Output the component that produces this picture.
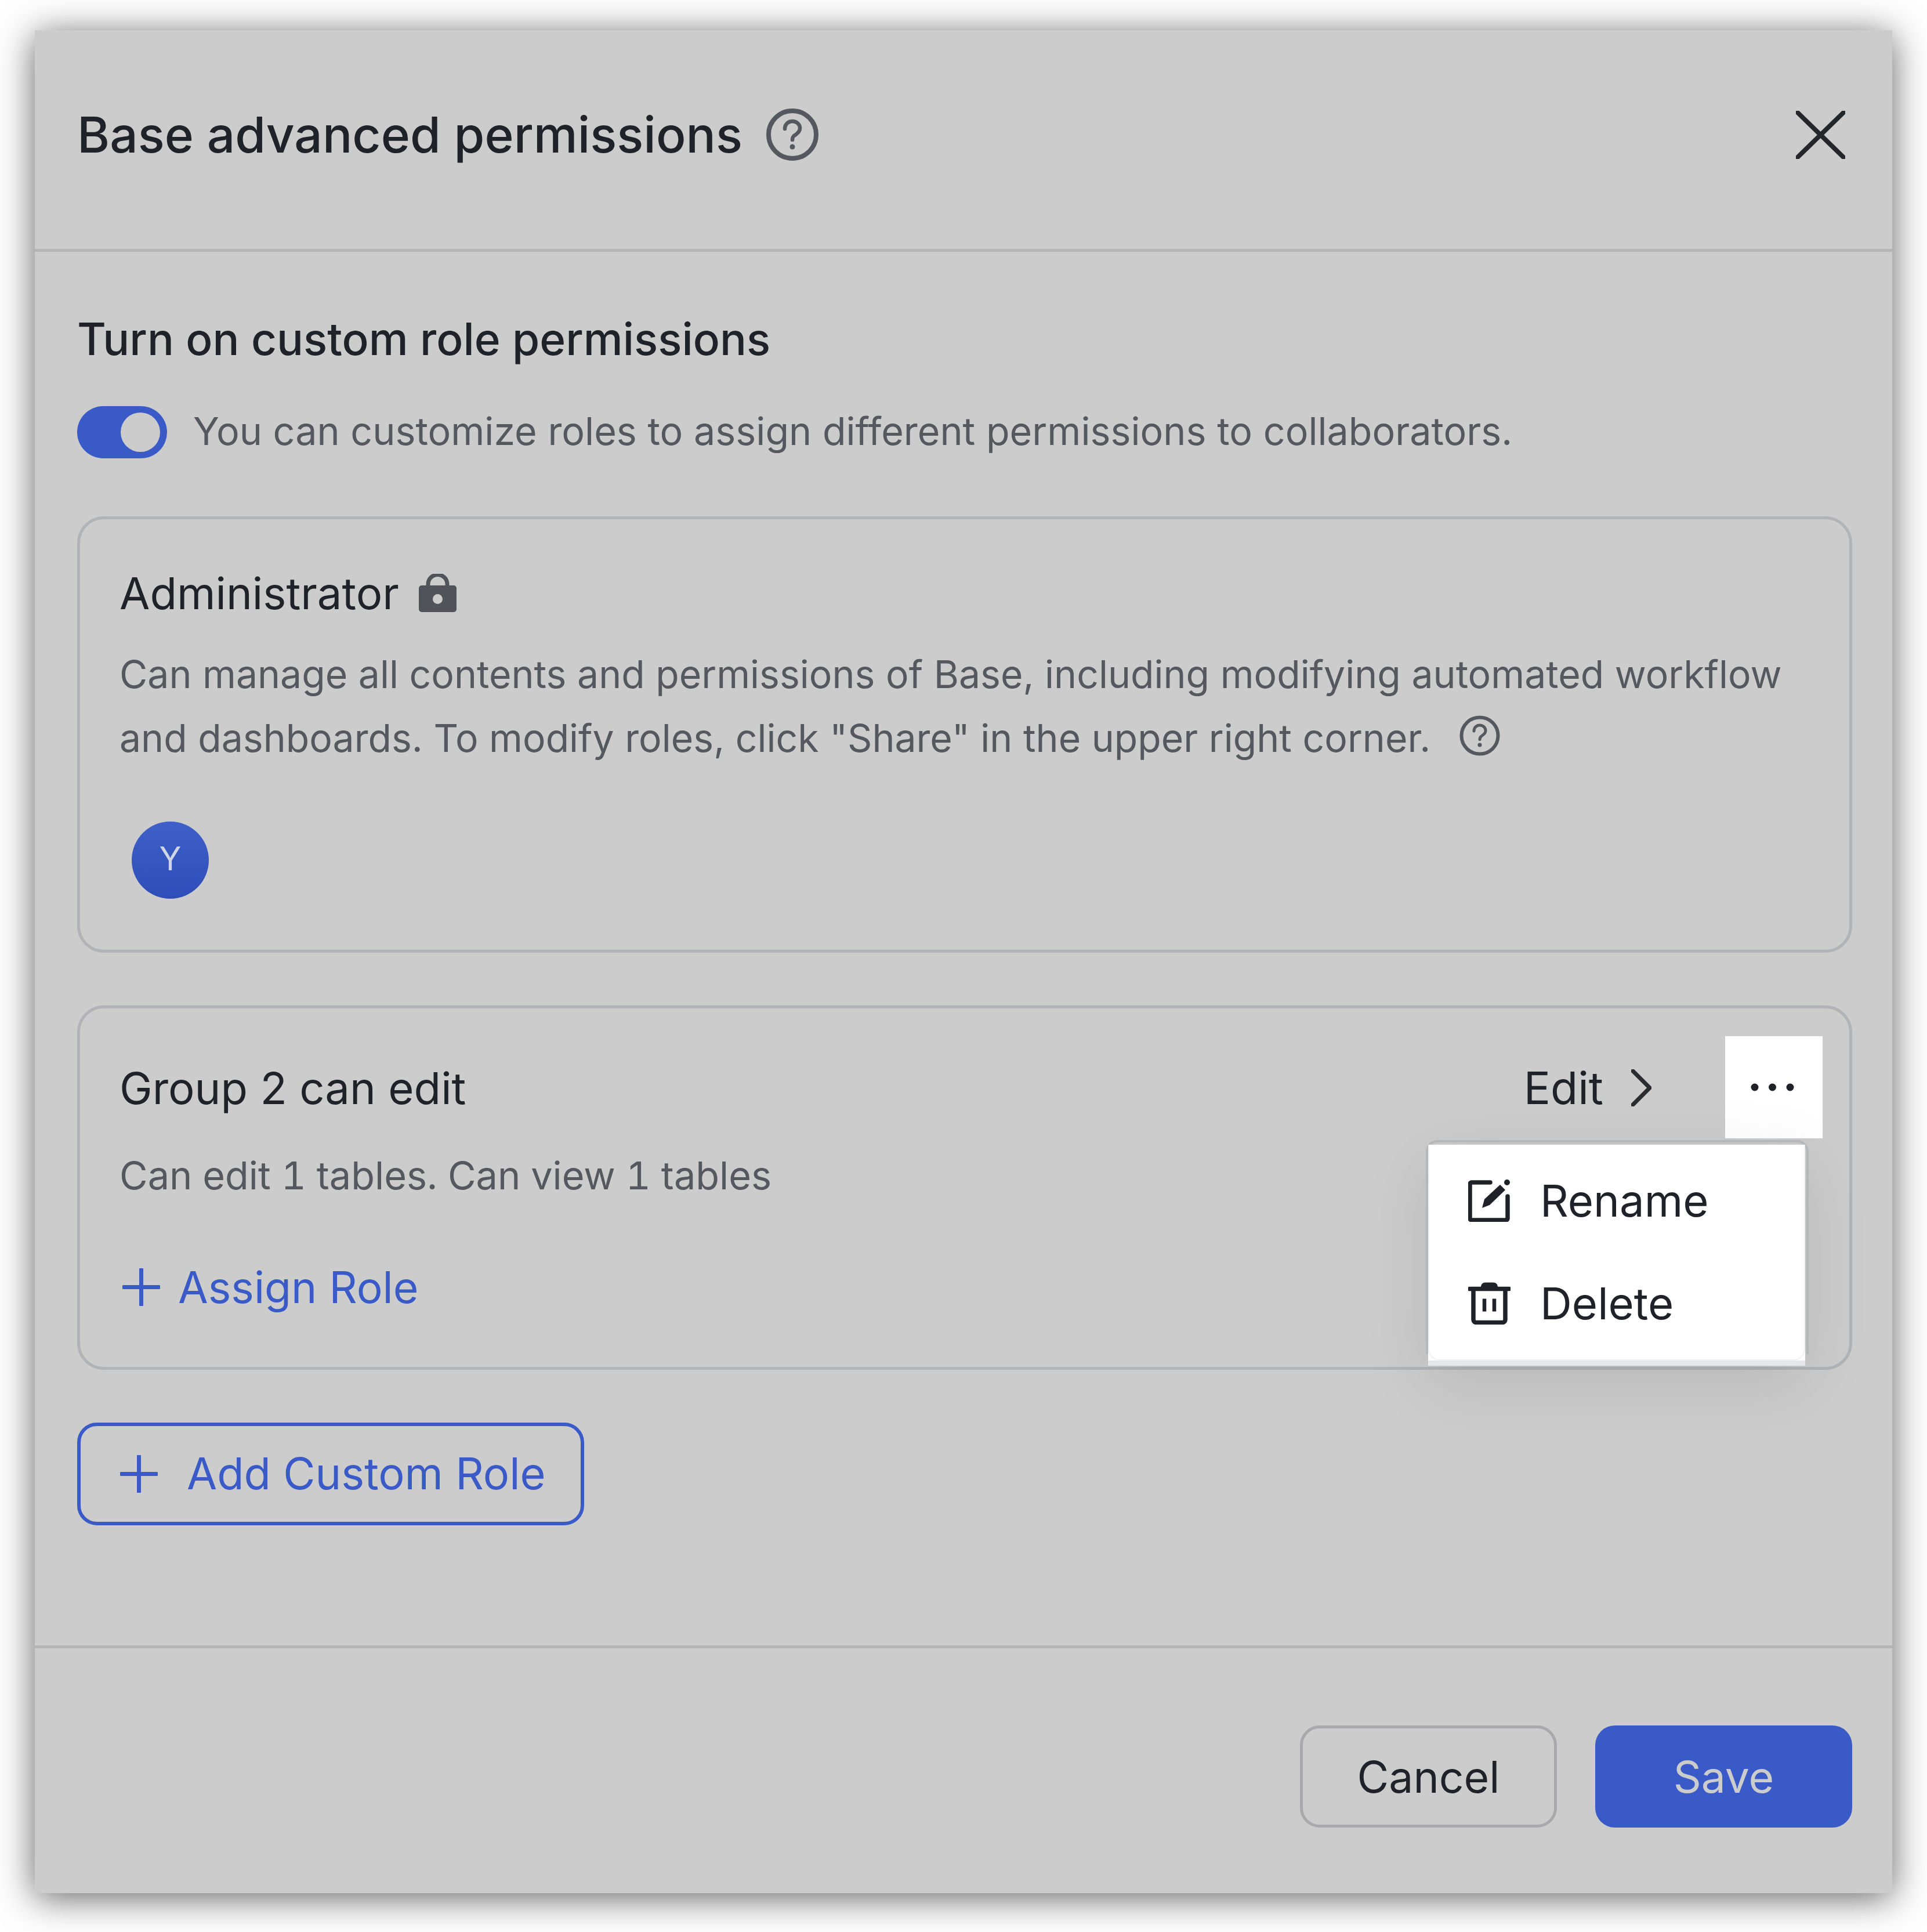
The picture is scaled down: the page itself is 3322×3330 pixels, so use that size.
<div class="page">
  <div class="dialog">
    <header class="head">
      <h1>Base advanced permissions</h1>
      <svg class="q-big" viewBox="0 0 90 90"><circle cx="45" cy="45" r="41" fill="none" stroke="#55585e" stroke-width="8"/><path d="M32 35c0-8 6-13 13-13s13 5 13 12c0 5-3 8-7 11-4 2-6 4-6 9" fill="none" stroke="#55585e" stroke-width="6.500" stroke-linecap="round"/><circle cx="45" cy="66" r="4.500" fill="#55585e"/></svg>
      <svg class="close" viewBox="0 0 85 83"><path d="M3 3l79 77M82 3L3 80" fill="none" stroke="#23262b" stroke-width="8" stroke-linecap="round"/></svg>
    </header>

    <main class="body">
      <h2>Turn on custom role permissions</h2>
      <div class="toggle-row">
        <span class="toggle"><span class="knob"></span></span>
        <span class="muted lead">You can customize roles to assign different permissions to collaborators.</span>
      </div>

      <section class="card admin">
        <div class="name-row">
          <span class="name">Administrator</span>
          <svg class="lock" viewBox="0 0 65 66"><path d="M16 22v-4a16.500 16.500 0 0 1 33 0v4" fill="none" stroke="#50535a" stroke-width="7"/><path fill-rule="evenodd" fill="#50535a" d="M5 20h55a5 5 0 0 1 5 5v36a5 5 0 0 1-5 5H5a5 5 0 0 1-5-5V25a5 5 0 0 1 5-5zm27.500 15a8.500 8.500 0 1 0 0 17 8.500 8.500 0 0 0 0-17z"/></svg>
        </div>
        <p class="muted desc">Can manage all contents and permissions of Base, including modifying automated workflow and dashboards. To modify roles, click "Share" in the upper right corner.<svg class="q-small" viewBox="0 0 70 70"><circle cx="35" cy="35" r="31.500" fill="none" stroke="#55585e" stroke-width="6"/><path d="M25 27c0-6 4.500-10 10-10s10 4 10 9.500c0 4-2.500 6-5.500 8-3 2-4.500 3.500-4.500 7" fill="none" stroke="#55585e" stroke-width="5" stroke-linecap="round"/><circle cx="35" cy="51" r="3.600" fill="#55585e"/></svg></p>
        <div class="avatar">Y</div>
      </section>

      <section class="card group">
        <div class="name-row">
          <span class="name grow">Group 2 can edit</span>
          <span class="edit">Edit</span>
          <svg class="chev" viewBox="0 0 35 64"><path d="M3 3l29 29L3 61" fill="none" stroke="#2a2d32" stroke-width="7" stroke-linecap="round" stroke-linejoin="round"/></svg>
        </div>
        <p class="muted sub">Can edit 1 tables. Can view 1 tables</p>
        <div class="assign">
          <svg class="plus" viewBox="0 0 65 65"><path d="M32.500 2v61M2 32.500h61" fill="none" stroke="#3a5bc7" stroke-width="7" stroke-linecap="round"/></svg>
          <span>Assign Role</span>
        </div>

        <div class="more">
          <svg class="dots" viewBox="0 0 75 14"><circle cx="7" cy="7" r="6.500" fill="#1f2329"/><circle cx="37.500" cy="7" r="6.500" fill="#1f2329"/><circle cx="68" cy="7" r="6.500" fill="#1f2329"/></svg>
        </div>
        <div class="menu">
          <div class="item">
            <svg class="mi" viewBox="0 0 73 74"><path d="M38 6H6a3 3 0 0 0-3 3v59a3 3 0 0 0 3 3h59a3 3 0 0 0 3-3V30" fill="none" stroke="#1f2329" stroke-width="7.500" stroke-linecap="round"/><path d="M24 50l4-15 27-25 9 9-27 26z" fill="#1f2329"/><circle cx="67" cy="6" r="5" fill="#1f2329"/></svg>
            <span>Rename</span>
          </div>
          <div class="item">
            <svg class="mi" viewBox="0 0 73 73"><path d="M2 12h69" stroke="#1f2329" stroke-width="7.500" stroke-linecap="round"/><path d="M22 9c0-5 3-8 8-8h13c5 0 8 3 8 8z" fill="#1f2329"/><path d="M9 13v52a5 5 0 0 0 5 5h45a5 5 0 0 0 5-5V13" fill="none" stroke="#1f2329" stroke-width="7.500"/><path d="M28 29v22M45 29v22" stroke="#1f2329" stroke-width="6.500"/></svg>
            <span>Delete</span>
          </div>
        </div>
      </section>

      <button class="add">
        <svg class="plus" viewBox="0 0 65 65"><path d="M32.500 2v61M2 32.500h61" fill="none" stroke="#3a5bc7" stroke-width="7" stroke-linecap="round"/></svg>
        <span>Add Custom Role</span>
      </button>
    </main>

    <footer class="foot">
      <button class="cancel">Cancel</button>
      <button class="save">Save</button>
    </footer>
  </div>
</div>

<style>
  :global(body) { margin: 0; background: #fff; }
  .page { padding: 52px 60px 0; width: 3322px; height: 3330px; box-sizing: border-box; overflow: hidden; font-family: Inter, "Liberation Sans", sans-serif; color: #1f2329; }
  .dialog { width: 3202px; height: 3211px; background: #ccc; box-shadow: 0 8px 60px rgba(0,0,0,.62); display: flex; flex-direction: column; box-sizing: border-box; }
  .head { height: 382px; box-sizing: border-box; flex: none; border-bottom: 5px solid #b5b5b5; display: flex; align-items: center; padding: 0 81px 17px 73px; }
  h1 { margin: 0; font-size: 85.5px; font-weight: 500; line-height: 100px; }
  .q-big { width: 90px; height: 90px; margin-left: 41px; }
  .close { width: 85px; height: 83px; margin-left: auto; }
  .body { flex: 1; padding: 105px 69px 0 73px; display: flex; flex-direction: column; align-items: stretch; }
  h2 { margin: 0 0 71px; font-size: 76.5px; font-weight: 500; line-height: 90px; }
  .toggle-row { display: flex; align-items: center; height: 90px; margin-bottom: 100px; }
  .toggle { width: 155px; height: 90px; border-radius: 45px; background: #3a5bc7; display: flex; align-items: center; justify-content: flex-end; padding-right: 12px; box-sizing: border-box; flex: none; }
  .knob { width: 68px; height: 68px; border-radius: 50%; background: #ccc; }
  .muted { color: #55585e; }
  .lead { margin-left: 45px; font-size: 66.35px; line-height: 90px; padding-bottom: 4px; }
  .card { border: 5px solid #b2b3b7; border-radius: 46px; padding-left: 68px; padding-right: 68px; position: relative; }
  .admin { padding-top: 82px; padding-bottom: 88px; margin-bottom: 91px; }
  .group { padding-top: 92px; padding-bottom: 93px; margin-bottom: 91px; z-index: 0; }
  .name-row { display: flex; align-items: center; height: 90px; }
  .name { font-size: 76px; line-height: 90px; }
  .grow { flex: 1; }
  .lock { width: 65px; height: 66px; margin-left: 34px; }
  .desc { margin: 40px 0 89px; font-size: 66.1px; line-height: 110px; }
  .q-small { width: 70px; height: 70px; margin-left: 50px; vertical-align: -7px; }
  .avatar { width: 133px; height: 133px; margin-left: 21px; border-radius: 50%; background: linear-gradient(#3f60c8, #2e4db8); color: #d0d6e6; display: flex; align-items: center; justify-content: center; font-size: 56px; padding-bottom: 6px; box-sizing: border-box; }
  .edit { font-size: 77px; margin-right: 48px; }
  .chev { width: 35px; height: 64px; margin-right: 273px; }
  .sub { margin: 61px 0 102px; font-size: 66.6px; line-height: 90px; font-variant-numeric: tabular-nums; }
  .assign { display: flex; align-items: center; height: 90px; color: #3a5bc7; font-size: 75px; margin-left: 5px; }
  .plus { width: 65px; height: 65px; flex: none; }
  .assign span { margin-left: 31px; }
  .more { position: absolute; right: 46px; top: 48px; width: 168px; height: 176px; background: #fff; display: flex; align-items: center; justify-content: center; padding-right: 6px; box-sizing: border-box; }
  .dots { width: 75px; height: 14px; }
  .menu { position: absolute; z-index: 1; left: 2324px; top: 235px; width: 650px; height: 381px; background: linear-gradient(#fff calc(100% - 9px), #e6e7ea 0); box-shadow: 0 30px 110px rgba(0,0,0,.1); padding-top: 7px; box-sizing: border-box; }
  .menu::before { content: ""; position: absolute; left: -4px; top: -8px; right: -6px; bottom: 20px; border: 4px solid #b6b7bb; border-bottom: 0; border-radius: 20px 20px 0 0; z-index: -1; }
  .menu::after { content: ""; position: absolute; inset: 0 0 9px; background: #fff; border: 2px solid #f1f1f3; border-top: 0; border-radius: 0 0 20px 20px; z-index: -1; }
  .item { display: flex; align-items: center; height: 177px; padding-left: 69px; font-size: 76px; color: #1f2329; }
  .mi { width: 73px; height: 74px; flex: none; margin-right: 51px; }
  button { font-family: inherit; font-size: 75px; box-sizing: border-box; cursor: pointer; }
  .add { align-self: flex-start; width: 874px; height: 177px; border: 6px solid #3a5bc7; border-radius: 34px; background: none; color: #3a5bc7; display: flex; align-items: center; padding: 0 0 2px 68px; font-size: 75.7px; }
  .add .plus { margin-top: 2px; }
  .add span { margin-left: 50px; }
  .foot { flex: none; height: 427px; box-sizing: border-box; border-top: 5px solid #b5b5b5; padding: 133px 69px 0 0; display: flex; justify-content: flex-end; align-items: flex-start; gap: 66px; }
  .cancel { width: 443px; height: 176px; border: 5px solid #a9a9ab; border-radius: 34px; background: none; color: #1f2329; }
  .save { width: 443px; height: 176px; border: 0; border-radius: 34px; background: #3a5bc7; color: #ccc; }
</style>
